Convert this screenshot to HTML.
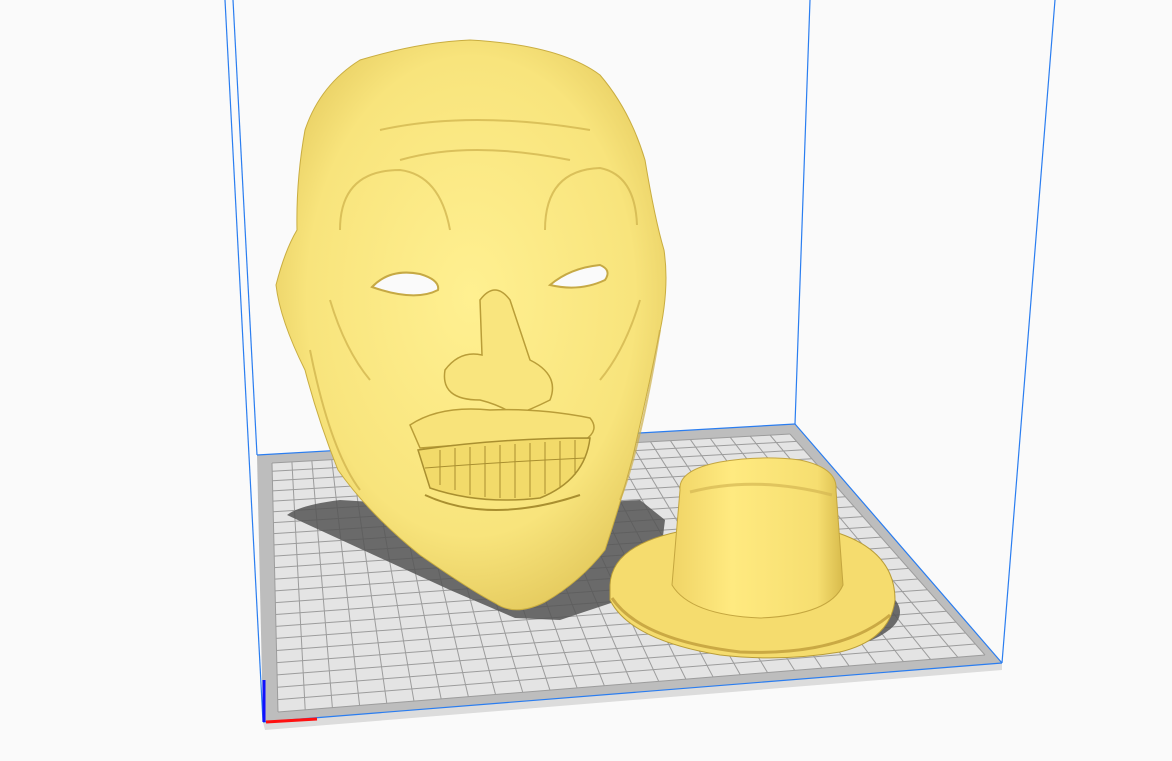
<!DOCTYPE html>
<html><head><meta charset="utf-8"><style>
html,body{margin:0;padding:0;background:#fafafa;width:1172px;height:761px;overflow:hidden}
svg{display:block}
</style></head><body>
<svg id="s" width="1172" height="761" viewBox="0 0 1172 761" xmlns="http://www.w3.org/2000/svg">
<defs>
<radialGradient id="fg" cx="0.5" cy="0.45" r="0.6">
<stop offset="0" stop-color="#fff091"/><stop offset="0.7" stop-color="#f8e47c"/><stop offset="1" stop-color="#e2c75a"/>
</radialGradient>
<linearGradient id="hg" x1="0" x2="1">
<stop offset="0" stop-color="#f0d466"/><stop offset="0.35" stop-color="#ffea80"/><stop offset="0.85" stop-color="#f6de70"/><stop offset="1" stop-color="#d8bb4c"/>
</linearGradient>
</defs>
<polygon points="263,722 1002,663 1002,670 265,730" fill="#dcdcdc"/>
<polygon points="257,455 795,424 1002,663 263,722" fill="#bdbdbd"/>
<polygon points="272,463 790,434 985,655 278,712" fill="#e4e4e4"/>
<g id="grid" stroke="#9c9c9c" stroke-width="1"></g>
<path d="M287,515 Q300,505 340,500 L420,505 L560,505 L640,500 L665,520 L660,560 L620,600 L560,620 L515,618 L450,590 Z" fill="#555" opacity="0.85"/>
<ellipse cx="770" cy="612" rx="130" ry="45" fill="#555" opacity="0.85"/>
<g stroke="#2a7df0" stroke-width="1.2" fill="none">
<line x1="225" y1="0" x2="263" y2="722"/>
<line x1="233" y1="0" x2="257" y2="455"/>
<line x1="810" y1="0" x2="795" y2="424"/>
<line x1="1055" y1="0" x2="1002" y2="663"/>
<line x1="257" y1="455" x2="795" y2="424"/>
<line x1="795" y1="424" x2="1002" y2="663"/>
<line x1="263" y1="722" x2="1002" y2="663"/>
</g>
<line x1="264" y1="680" x2="264" y2="722" stroke="#1010ff" stroke-width="3"/>
<line x1="266" y1="722" x2="317" y2="719" stroke="#ff1010" stroke-width="3"/>
<path d="M470,40 Q420,42 360,60 Q320,85 305,130 Q296,180 297,230 Q285,250 276,285 Q280,320 305,370 Q318,420 338,470 Q370,515 420,555 Q470,590 495,603 Q515,617 545,602 Q580,582 605,550 Q620,505 632,460 Q646,400 658,340 Q670,290 664,250 Q655,220 645,160 Q630,110 600,75 Q560,45 470,40 Z" fill="url(#fg)" stroke="#c9ad40" stroke-width="1"/>
<g fill="none" stroke="#cdb04a" stroke-width="2" opacity="0.7">
<path d="M340,230 Q340,170 400,170 Q440,175 450,230"/>
<path d="M545,230 Q545,170 600,168 Q635,175 637,225"/>
<path d="M330,300 Q345,350 370,380"/>
<path d="M640,300 Q625,350 600,380"/>
<path d="M400,160 Q470,140 570,160"/>
<path d="M380,130 Q470,110 590,130"/>
<path d="M310,350 Q330,450 360,490"/>
<path d="M660,330 Q640,450 620,500"/>
</g>
<path d="M372,287 Q390,268 420,274 Q440,280 438,290 Q415,302 372,287 Z" fill="#fafafa" stroke="#c6a944" stroke-width="2"/>
<path d="M550,285 Q570,268 600,265 Q612,270 605,280 Q580,292 550,285 Z" fill="#fafafa" stroke="#c6a944" stroke-width="2"/>
<path d="M480,300 Q495,280 510,300 L530,360 Q560,375 550,400 Q530,410 515,415 Q500,405 480,400 Q440,400 445,370 Q460,350 482,355 Z" fill="#f9e57e" stroke="#b99d38" stroke-width="1.5"/>
<path d="M410,425 Q440,405 490,410 Q540,408 590,418 Q600,430 585,440 Q520,440 420,448 Z" fill="#f8e37a" stroke="#b99d38" stroke-width="1.5"/>
<path d="M418,450 Q500,438 590,438 Q585,480 540,498 Q480,505 430,488 Z" fill="#f2da6a" stroke="#a98f30" stroke-width="1.5"/>
<g stroke="#a98f30" stroke-width="1" fill="none">
<path d="M425,468 Q500,462 585,458"/>
<path d="M440,450 L440,485 M455,448 L455,490 M470,447 L470,495 M485,446 L485,497 M500,445 L500,498 M515,444 L515,498 M530,443 L530,497 M545,442 L545,494 M560,441 L560,488 M575,440 L575,475"/>
</g>
<path d="M425,495 Q490,525 580,495" fill="none" stroke="#a98f30" stroke-width="2"/>
<path d="M610,585 Q612,540 700,528 L820,528 Q895,545 895,600 Q890,640 840,652 Q780,662 720,655 Q630,640 610,600 Z" fill="#f5dc6e" stroke="#b99d38" stroke-width="1"/>
<path d="M612,598 Q640,640 740,652 Q840,656 890,615" fill="none" stroke="#caa944" stroke-width="3"/>
<path d="M680,490 Q678,470 720,462 Q760,455 800,460 Q838,468 836,490 L843,585 Q830,615 760,618 Q690,615 672,585 Z" fill="url(#hg)" stroke="#c4a63f" stroke-width="1"/>
<path d="M690,492 Q755,475 832,495" fill="none" stroke="#d4b752" stroke-width="3" opacity="0.7"/>
</svg>
<script>
(function(){
var g=document.getElementById('grid');
var A=[272,463],B=[790,434],C=[985,655],D=[278,712];
function L(p,q,t){return [p[0]+(q[0]-p[0])*t,p[1]+(q[1]-p[1])*t];}
function add(p,q){var l=document.createElementNS('http://www.w3.org/2000/svg','line');
l.setAttribute('x1',p[0]);l.setAttribute('y1',p[1]);l.setAttribute('x2',q[0]);l.setAttribute('y2',q[1]);g.appendChild(l);}
var nx=26,ny=22;
for(var i=0;i<=nx;i++){var t=i/nx;add(L(A,B,t),L(D,C,t));}
for(var j=0;j<=ny;j++){var u=Math.pow(j/ny,1.1);add(L(A,D,u),L(B,C,u));}
})();
</script>
</body></html>
